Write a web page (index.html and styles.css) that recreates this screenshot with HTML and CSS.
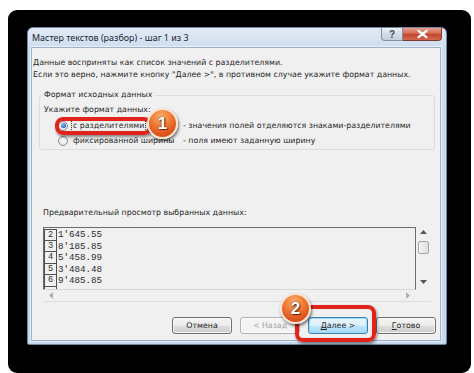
FILE: index.html
```html
<!DOCTYPE html>
<html lang="ru">
<head>
<meta charset="utf-8">
<title>Мастер текстов</title>
<link rel="stylesheet" href="styles.css">
</head>
<body>
<div class="screen">
  <div class="window">
    <div class="titlebar">
      <span class="title">Мастер текстов (разбор) - шаг 1 из 3</span>
      <div class="tbtns">
        <span class="tbtn help">?</span>
        <span class="tbtn close"><svg width="11" height="8" viewBox="0 0 11 8"><path d="M1.5 0.8 L9.5 7.2 M9.5 0.8 L1.5 7.2" stroke="#fff" stroke-width="2.2" stroke-linecap="round"/></svg></span>
      </div>
    </div>
    <div class="content">
      <p class="line">Данные восприняты как список значений с разделителями.</p>
      <p class="line">Если это верно, нажмите кнопку "Далее &gt;", в противном случае укажите формат данных.</p>
      <fieldset class="group">
        <legend>Формат исходных данных</legend>
        <div class="line">Укажите формат данных:</div>
        <div class="opt">
          <span class="radio on"></span>
          <span class="olabel"><span class="focus">с разделителями</span></span>
          <span class="odesc">- значения полей отделяются знаками-разделителями</span>
        </div>
        <div class="opt">
          <span class="radio"></span>
          <span class="olabel"><span class="nofocus">фиксированной ширины</span></span>
          <span class="odesc">- поля имеют заданную ширину</span>
        </div>
      </fieldset>
      <div class="line plabel">Предварительный просмотр выбранных данных:</div>
      <div class="preview">
        <div class="data">
          <div class="row first"><span class="num">2</span><span class="val">1'645.55</span></div>
          <div class="row"><span class="num">3</span><span class="val">8'185.85</span></div>
          <div class="row"><span class="num">4</span><span class="val">5'458.99</span></div>
          <div class="row"><span class="num">5</span><span class="val">3'484.48</span></div>
          <div class="row"><span class="num">6</span><span class="val">9'485.85</span></div>
          <div class="row tail"><span class="num"></span></div>
        </div>
        <div class="vscroll">
          <svg class="arr" width="7" height="4" viewBox="0 0 7 4"><path d="M0 4 L3.5 0 L7 4 Z" fill="#555"/></svg>
          <span class="thumb"></span>
          <span class="vspace"></span>
          <svg class="arr" width="7" height="4" viewBox="0 0 7 4"><path d="M0 0 L3.5 4 L7 0 Z" fill="#555"/></svg>
        </div>
        <div class="hscroll">
          <svg width="4" height="7" viewBox="0 0 4 7"><path d="M4 0 L0 3.5 L4 7 Z" fill="#b0b0b0"/></svg>
          <svg width="4" height="7" viewBox="0 0 4 7"><path d="M0 0 L4 3.5 L0 7 Z" fill="#b0b0b0"/></svg>
        </div>
      </div>
      <div class="buttons">
        <span class="btn">Отмена</span>
        <span class="btn disabled">&lt; Назад</span>
        <span class="btn default"><u>Д</u>алее &gt;</span>
        <span class="btn"><u>Г</u>отово</span>
      </div>
    </div>
  </div>
  <div class="mark mark1"></div>
  <div class="badge badge1">1</div>
  <div class="mark mark2"></div>
  <div class="badge badge2">2</div>
</div>
</body>
</html>
```

FILE: styles.css
```css
* { box-sizing: border-box; }
html, body { margin: 0; padding: 0; }
body {
  width: 474px;
  height: 373px;
  overflow: hidden;
  background: #ffffff;
  font-family: "DejaVu Sans", "Liberation Sans", sans-serif;
  font-size: 7.85px;
  color: #262626;
}
.screen {
  position: relative;
  margin: 10px 3px 0 8px;
  height: 363px;
  background: #000;
  border-radius: 9px;
  padding: 17px 0 0 19px;
}
.window {
  width: 420px;
  height: 318px;
  border: 1px solid #6f86a3;
  border-radius: 6px 6px 2px 2px;
  background: linear-gradient(#e2ebf6 0, #cddcee 20px, #c5d8ee 100%);
  padding: 0 5px 3px 3px;
  display: flex;
  flex-direction: column;
}
.titlebar {
  height: 19px;
  display: flex;
  justify-content: space-between;
  align-items: flex-start;
}
.title {
  font-family: "Noto Sans", "Open Sans", sans-serif;
  font-size: 8.95px;
  line-height: 20px;
  padding-left: 1px;
  color: #1e2630;
}
.tbtns {
  display: flex;
  margin-right: -1px;
}
.tbtn {
  height: 13px;
  display: flex;
  align-items: center;
  justify-content: center;
}
.help {
  width: 22px;
  border: 1px solid #8391a6;
  border-top: none;
  border-radius: 0 0 0 4px;
  background: linear-gradient(#eef2f7, #d3dce7 50%, #c4cfdd);
  color: #3c4a5c;
  font-family: "Liberation Sans", sans-serif;
  font-size: 10px;
  font-weight: bold;
}
.close {
  width: 39px;
  border: 1px solid #7b3a2e;
  border-top: none;
  border-left: none;
  border-radius: 0 0 4px 0;
  background: linear-gradient(#e8a28f, #d26a52 45%, #c2452c 55%, #d46a4e);
}
.content {
  flex: 1;
  background: #f0f0f0;
  border: 1px solid #9db1ca;
  box-shadow: 0 0 0 1px rgba(255,255,255,0.55);
  padding: 9px 0 0 1px;
}
.line {
  margin: 0;
  height: 12px;
  line-height: 12px;
  white-space: nowrap;
}
.group {
  margin: 8px 5px 0 6px;
  padding: 3px 4px 1px 4px;
  border: 1px solid #d5dfe5;
  border-radius: 3px;
  min-inline-size: 0;
}
.group legend {
  padding: 0 2px;
  margin-left: -2px;
  line-height: 12px;
  height: 12px;
}
.opt {
  margin-top: 2px;
  height: 15px;
  display: flex;
  align-items: center;
  padding-left: 14px;
  white-space: nowrap;
}
.opt + .opt { margin-top: 0; }
.radio {
  width: 10px;
  height: 10px;
  border-radius: 50%;
  border: 1px solid #8d9094;
  background: radial-gradient(circle at 50% 40%, #ffffff, #e2e4e7 70%, #cfd2d6);
  margin-right: 3px;
  display: flex;
  align-items: center;
  justify-content: center;
}
.radio.on::after {
  content: "";
  width: 5px;
  height: 5px;
  border-radius: 50%;
  background: radial-gradient(circle at 40% 35%, #8fc0f2, #2a62b8 70%, #1d4b94);
}
.olabel {
  width: 112px;
  display: flex;
}
.focus, .nofocus {
  border: 1px dotted #333;
  padding: 0 1px;
  line-height: 11px;
}
.nofocus { border-color: transparent; }
.plabel { margin: 57px 0 0 10px; }
.preview {
  margin: 8px 0 0 10px;
  width: 388px;
  display: grid;
  grid-template-columns: 373px 15px;
  grid-template-rows: 63px 12px;
}
.data {
  border: 1px solid #6b6b6b;
  border-bottom-color: #d8d8d8;
  padding-top: 1px;
  overflow: hidden;
  font-family: "Liberation Mono", monospace;
  font-size: 9.2px;
  color: #2b2b2b;
}
.row {
  height: 11.6px;
  display: flex;
  align-items: stretch;
  line-height: 11px;
}
.num {
  width: 13px;
  border-left: 1px solid #505050;
  border-right: 1px solid #505050;
  border-bottom: 1px solid #505050;
  text-align: center;
  font-size: 8.5px;
}
.first .num { border-top: 1px solid #505050; }
.tail .num { border-bottom: none; }
.val { padding-left: 1px; }
.vscroll {
  display: flex;
  flex-direction: column;
  align-items: center;
  padding-top: 3px;
}
.vscroll .arr { flex: none; }
.thumb {
  margin-top: 7px;
  width: 11px;
  height: 13px;
  border: 1px solid #a5a5a5;
  border-radius: 2px;
  background: linear-gradient(90deg, #f4f4f4, #dedede);
}
.vspace { flex: 1; }
.vscroll svg:last-child { margin-bottom: 6px; }
.hscroll {
  grid-column: 1 / 3;
  border-bottom: 1px solid #dedede;
  display: flex;
  justify-content: space-between;
  align-items: center;
  padding: 0 21px 0 6px;
}
.buttons {
  margin-top: 15px;
  display: flex;
  justify-content: flex-end;
  gap: 8px;
  padding-right: 4px;
}
.btn {
  width: 60px;
  height: 17px;
  border: 1px solid #707070;
  border-radius: 3px;
  background: linear-gradient(#f4f4f4 0, #ebebeb 50%, #dddddd 51%, #cfcfcf 100%);
  box-shadow: inset 0 0 0 1px rgba(255,255,255,0.7);
  display: flex;
  align-items: center;
  justify-content: center;
  color: #222;
  white-space: nowrap;
}
.btn.disabled {
  border-color: #adb2b5;
  background: #f4f4f4;
  color: #a0a0a0;
}
.btn.default {
  border-color: #3c7fb1;
  background: linear-gradient(#eaf6fd 0, #d9f0fc 50%, #bee6fd 51%, #a7d9f5 100%);
  box-shadow: inset 0 0 0 1px #9fdcf8;
}
.btn u { text-decoration-thickness: 1px; text-underline-offset: 1px; }
.mark {
  position: absolute;
  border: 4px solid #e1231a;
  border-radius: 8px;
  box-shadow: 1px 2px 3px rgba(0,0,0,0.45), inset 0 0 1px rgba(0,0,0,0.3);
}
.mark1 { left: 47px; top: 107px; width: 97px; height: 18px; }
.mark2 { left: 287px; top: 295px; width: 81px; height: 37px; }
.badge {
  position: absolute;
  width: 31px;
  height: 31px;
  border-radius: 50%;
  border: 2px solid #fbe3d2;
  background: radial-gradient(circle at 45% 25%, #f9b071 0, #ee7a35 40%, #d9501a 75%, #c23f10 100%);
  box-shadow: 1px 2px 3px rgba(0,0,0,0.55);
  color: #fff;
  font-family: "Liberation Sans", sans-serif;
  font-weight: bold;
  font-size: 17px;
  line-height: 27px;
  text-align: center;
  text-shadow: 0 0 2px #6b2508, 1px 1px 1px #6b2508;
}
.badge1 { left: 139px; top: 98px; }
.badge2 { left: 272px; top: 283px; }
```
